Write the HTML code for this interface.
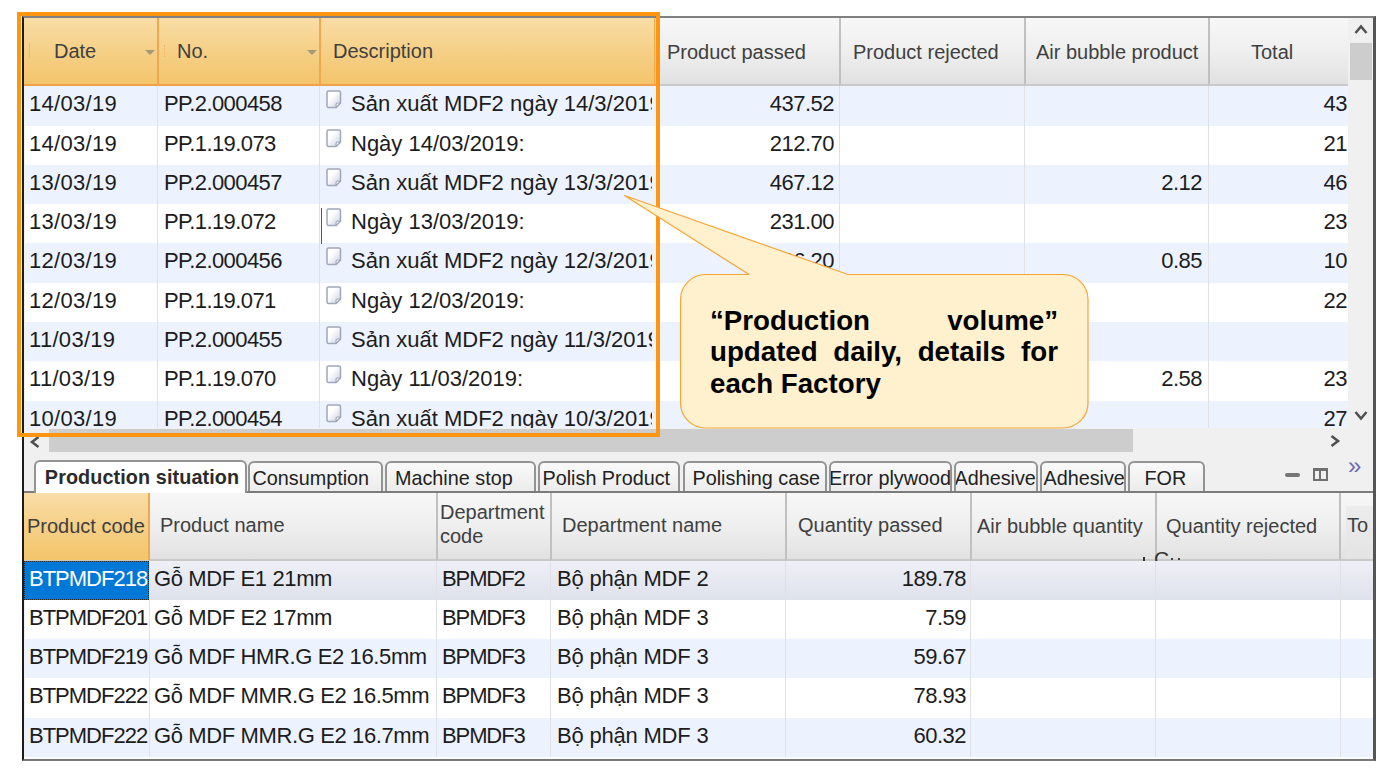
<!DOCTYPE html>
<html lang="vi">
<head>
<meta charset="utf-8">
<title>Production volume</title>
<style>
html,body{margin:0;padding:0;background:#fff;}
body{width:1396px;height:771px;position:relative;overflow:hidden;font-family:"Liberation Sans",sans-serif;color:#1a1a1a;}
.abs{position:absolute;}
#win{position:absolute;left:22px;top:16px;width:1354px;height:745px;background:#f0f0f0;box-sizing:border-box;border-left:2px solid #1c1c1c;border-top:2px solid #808080;border-right:3px solid #555;border-bottom:2px solid #777;}
/* rows */
.row{position:absolute;left:25px;height:39px;}
.alt{background:#ecf2fe;}
.wht{background:#ffffff;}
.cell{position:absolute;top:0;height:100%;font-size:22px;line-height:36px;white-space:nowrap;overflow:hidden;color:#1c1c1c;}
.r{text-align:right;letter-spacing:-0.5px;}
.l1{letter-spacing:-0.6px;}.l2{letter-spacing:0;}.l3{letter-spacing:-1px;}.l4{letter-spacing:-0.38px;}.l5{letter-spacing:-1.1px;}.l6{letter-spacing:-0.2px;}
.vsep{position:absolute;width:1px;background:#e0e1e6;}
.hdr{position:absolute;background:linear-gradient(#f7f7f7 0%,#efefef 50%,#e1e1e1 100%);}
.hdro{position:absolute;background:linear-gradient(#f9dda6 0%,#f6d18a 45%,#f3c56b 100%);}
.ht{position:absolute;font-size:20px;line-height:23.5px;color:#404040;white-space:nowrap;}
.hsep{position:absolute;width:2px;background:#c0c0c0;}
.tab{position:absolute;top:461px;height:30px;box-sizing:border-box;border:2px solid #939393;border-bottom:none;border-radius:6px 6px 0 0;background:linear-gradient(#f9f9f9,#ececec);font-size:19.8px;line-height:31px;color:#222;white-space:nowrap;overflow:hidden;text-align:center;}
.cb{position:absolute;left:6px;top:5px;width:15px;height:17px;border:1px solid #8e94a6;border-right-width:2px;border-bottom-width:2px;border-radius:3px;background:linear-gradient(160deg,#ffffff 35%,#d5d9e6 100%);box-sizing:border-box;}
</style>
</head>
<body>
<svg width="0" height="0" style="position:absolute"><defs>
<linearGradient id="nG" x1="0" y1="0" x2="1" y2="1"><stop offset="0.35" stop-color="#ffffff"/><stop offset="1" stop-color="#c9cfe2"/></linearGradient>
<symbol id="note" viewBox="0 0 16 19"><path d="M2.6 1 H12.9 Q14.5 1 14.5 2.6 V13 L10 17.6 H2.6 Q1 17.6 1 16 V2.6 Q1 1 2.6 1 Z" fill="url(#nG)" stroke="#a0a7bb" stroke-width="1.5"/><path d="M14.5 13 H11.6 Q10 13 10 14.6 V17.6 Z" fill="#f3f4f9" stroke="#a0a7bb" stroke-width="1.1" stroke-linejoin="round"/></symbol>
</defs></svg>
<div id="win"></div>

<!-- TOP GRID HEADER -->
<div id="tophdr">
<div class="hdro" style="left:24px;top:18px;width:634px;height:66px;"></div>
<div class="abs" style="left:24px;top:84px;width:634px;height:2px;background:#f0a24a;"></div>
<div class="hdr" style="left:658px;top:18px;width:690px;height:66px;"></div>
<div class="abs" style="left:658px;top:84px;width:690px;height:2px;background:#c9c9c9;"></div>
<div class="abs" style="left:157px;top:18px;width:2px;height:67px;background:#f1a650;"></div>
<div class="abs" style="left:319px;top:18px;width:2px;height:67px;background:#f1a650;"></div>
<div class="abs" style="left:654px;top:18px;width:1px;height:67px;background:#f1a650;"></div>
<div class="hsep" style="left:839px;top:18px;height:67px;"></div>
<div class="hsep" style="left:1024px;top:18px;height:67px;"></div>
<div class="hsep" style="left:1208px;top:18px;height:67px;"></div>
<div class="abs" style="left:29px;top:43px;width:1px;height:15px;background:#f3b674;"></div>
<div class="abs" style="left:164px;top:45px;width:1px;height:12px;border-left:1px dotted #f0b060;"></div>
<div class="ht" style="left:54px;top:40px;">Date</div>
<div class="abs" style="left:145px;top:50px;width:0;height:0;border-left:5px solid transparent;border-right:5px solid transparent;border-top:5px solid #a39a78;"></div>
<div class="ht" style="left:177px;top:40px;">No.</div>
<div class="abs" style="left:307px;top:50px;width:0;height:0;border-left:5px solid transparent;border-right:5px solid transparent;border-top:5px solid #a39a78;"></div>
<div class="ht" style="left:333px;top:40px;">Description</div>
<div class="ht" style="left:667px;top:41px;">Product passed</div>
<div class="ht" style="left:853px;top:41px;">Product rejected</div>
<div class="ht" style="left:1036px;top:41px;">Air bubble product</div>
<div class="ht" style="left:1251px;top:41px;">Total</div>
</div>
<!-- TOP GRID ROWS -->
<div id="toprows" class="abs" style="left:0;top:86.3px;width:1348px;height:341.7px;overflow:hidden;">
<div class="row alt" style="top:0.0px;width:1323px;height:39.3px;"><div class="cell" style="left:4px;width:128px;letter-spacing:0.3px;">14/03/19</div><div class="cell l1" style="left:139px;width:155px;">PP.2.000458</div><div class="cell l2" style="left:295px;width:332px;"><svg class="abs" style="left:5.5px;top:3.5px;" width="16" height="19"><use href="#note"/></svg><span style="margin-left:31px;">Sản xuất MDF2 ngày 14/3/2019</span></div><div class="cell r" style="left:640px;width:169px;">437.52</div><div class="cell r" style="left:1000px;width:177px;"></div><div class="cell r" style="left:1190px;width:132px;">43</div></div>
<div class="row wht" style="top:39.3px;width:1323px;height:39.3px;"><div class="cell" style="left:4px;width:128px;letter-spacing:0.3px;">14/03/19</div><div class="cell l1" style="left:139px;width:155px;">PP.1.19.073</div><div class="cell l2" style="left:295px;width:332px;"><svg class="abs" style="left:5.5px;top:3.5px;" width="16" height="19"><use href="#note"/></svg><span style="margin-left:31px;">Ngày 14/03/2019:</span></div><div class="cell r" style="left:640px;width:169px;">212.70</div><div class="cell r" style="left:1000px;width:177px;"></div><div class="cell r" style="left:1190px;width:132px;">21</div></div>
<div class="row alt" style="top:78.6px;width:1323px;height:39.3px;"><div class="cell" style="left:4px;width:128px;letter-spacing:0.3px;">13/03/19</div><div class="cell l1" style="left:139px;width:155px;">PP.2.000457</div><div class="cell l2" style="left:295px;width:332px;"><svg class="abs" style="left:5.5px;top:3.5px;" width="16" height="19"><use href="#note"/></svg><span style="margin-left:31px;">Sản xuất MDF2 ngày 13/3/2019</span></div><div class="cell r" style="left:640px;width:169px;">467.12</div><div class="cell r" style="left:1000px;width:177px;">2.12</div><div class="cell r" style="left:1190px;width:132px;">46</div></div>
<div class="row wht" style="top:117.9px;width:1323px;height:39.3px;"><div class="cell" style="left:4px;width:128px;letter-spacing:0.3px;">13/03/19</div><div class="cell l1" style="left:139px;width:155px;">PP.1.19.072</div><div class="cell l2" style="left:295px;width:332px;"><svg class="abs" style="left:5.5px;top:3.5px;" width="16" height="19"><use href="#note"/></svg><span style="margin-left:31px;">Ngày 13/03/2019:</span></div><div class="cell r" style="left:640px;width:169px;">231.00</div><div class="cell r" style="left:1000px;width:177px;"></div><div class="cell r" style="left:1190px;width:132px;">23</div></div>
<div class="row alt" style="top:157.2px;width:1323px;height:39.3px;"><div class="cell" style="left:4px;width:128px;letter-spacing:0.3px;">12/03/19</div><div class="cell l1" style="left:139px;width:155px;">PP.2.000456</div><div class="cell l2" style="left:295px;width:332px;"><svg class="abs" style="left:5.5px;top:3.5px;" width="16" height="19"><use href="#note"/></svg><span style="margin-left:31px;">Sản xuất MDF2 ngày 12/3/2019</span></div><div class="cell r" style="left:640px;width:169px;">106.20</div><div class="cell r" style="left:1000px;width:177px;">0.85</div><div class="cell r" style="left:1190px;width:132px;">10</div></div>
<div class="row wht" style="top:196.5px;width:1323px;height:39.3px;"><div class="cell" style="left:4px;width:128px;letter-spacing:0.3px;">12/03/19</div><div class="cell l1" style="left:139px;width:155px;">PP.1.19.071</div><div class="cell l2" style="left:295px;width:332px;"><svg class="abs" style="left:5.5px;top:3.5px;" width="16" height="19"><use href="#note"/></svg><span style="margin-left:31px;">Ngày 12/03/2019:</span></div><div class="cell r" style="left:640px;width:169px;">224.30</div><div class="cell r" style="left:1000px;width:177px;"></div><div class="cell r" style="left:1190px;width:132px;">22</div></div>
<div class="row alt" style="top:235.8px;width:1323px;height:39.3px;"><div class="cell" style="left:4px;width:128px;letter-spacing:0.3px;">11/03/19</div><div class="cell l1" style="left:139px;width:155px;">PP.2.000455</div><div class="cell l2" style="left:295px;width:332px;"><svg class="abs" style="left:5.5px;top:3.5px;" width="16" height="19"><use href="#note"/></svg><span style="margin-left:31px;">Sản xuất MDF2 ngày 11/3/2019</span></div><div class="cell r" style="left:640px;width:169px;"></div><div class="cell r" style="left:1000px;width:177px;"></div><div class="cell r" style="left:1190px;width:132px;"></div></div>
<div class="row wht" style="top:275.1px;width:1323px;height:39.3px;"><div class="cell" style="left:4px;width:128px;letter-spacing:0.3px;">11/03/19</div><div class="cell l1" style="left:139px;width:155px;">PP.1.19.070</div><div class="cell l2" style="left:295px;width:332px;"><svg class="abs" style="left:5.5px;top:3.5px;" width="16" height="19"><use href="#note"/></svg><span style="margin-left:31px;">Ngày 11/03/2019:</span></div><div class="cell r" style="left:640px;width:169px;">236.50</div><div class="cell r" style="left:1000px;width:177px;">2.58</div><div class="cell r" style="left:1190px;width:132px;">23</div></div>
<div class="row alt" style="top:314.4px;width:1323px;height:39.3px;"><div class="cell" style="left:4px;width:128px;letter-spacing:0.3px;">10/03/19</div><div class="cell l1" style="left:139px;width:155px;">PP.2.000454</div><div class="cell l2" style="left:295px;width:332px;"><svg class="abs" style="left:5.5px;top:3.5px;" width="16" height="19"><use href="#note"/></svg><span style="margin-left:31px;">Sản xuất MDF2 ngày 10/3/2019</span></div><div class="cell r" style="left:640px;width:169px;">271.40</div><div class="cell r" style="left:1000px;width:177px;"></div><div class="cell r" style="left:1190px;width:132px;">27</div></div>
<div class="abs" style="left:321px;top:122px;width:1px;height:36px;background:#555;"></div>
<div class="vsep" style="left:157px;top:0;height:342px;"></div>
<div class="vsep" style="left:319px;top:0;height:342px;"></div>
<div class="vsep" style="left:657px;top:0;height:342px;"></div>
<div class="vsep" style="left:839px;top:0;height:342px;"></div>
<div class="vsep" style="left:1024px;top:0;height:342px;"></div>
<div class="vsep" style="left:1208px;top:0;height:342px;"></div>
</div>
<!-- SCROLLBARS -->
<div id="scroll">
<div class="abs" style="left:1348px;top:18px;width:25px;height:410px;background:#f0f0f0;"></div>
<div class="abs" style="left:1350px;top:43px;width:22px;height:37px;background:#cdcdcd;"></div>
<svg class="abs" style="left:1352px;top:22px;" width="18" height="14" viewBox="0 0 18 14"><path d="M3.5 11 L9 4.5 L14.5 11" fill="none" stroke="#505050" stroke-width="2.5"/></svg>
<svg class="abs" style="left:1352px;top:409px;" width="18" height="14" viewBox="0 0 18 14"><path d="M3.5 3 L9 9.5 L14.5 3" fill="none" stroke="#505050" stroke-width="2.5"/></svg>
<div class="abs" style="left:24px;top:428px;width:1349px;height:24px;background:#f0f0f0;"></div>
<div class="abs" style="left:49px;top:429px;width:1084px;height:23px;background:#cdcdcd;"></div>
<svg class="abs" style="left:28px;top:434px;" width="14" height="16" viewBox="0 0 14 16"><path d="M10.5 3 L4 8 L10.5 13" fill="none" stroke="#505050" stroke-width="2.6"/></svg>
<svg class="abs" style="left:1328px;top:433px;" width="14" height="16" viewBox="0 0 14 16"><path d="M3.5 3 L10 8 L3.5 13" fill="none" stroke="#505050" stroke-width="2.6"/></svg>
</div>
<!-- TABS -->
<div id="tabs">
<div class="abs" style="left:24px;top:491px;width:1349px;height:2px;background:#7c7c7c;"></div>
<div class="tab" style="left:248px;width:135px;"><span class="abs" style="left:2.5px;top:0;">Consumption</span></div>
<div class="tab" style="left:385px;width:150.5px;"><span class="abs" style="left:8px;top:0;">Machine stop</span></div>
<div class="tab" style="left:537.5px;width:142.5px;"><span class="abs" style="left:3.0px;top:0;">Polish Product</span></div>
<div class="tab" style="left:682.5px;width:144.0px;"><span class="abs" style="left:8.0px;top:0;">Polishing case</span></div>
<div class="tab" style="left:828.5px;width:123.5px;"><span class="abs" style="left:-1.5px;top:0;">Error plywood</span></div>
<div class="tab" style="left:953.5px;width:84.0px;"><span class="abs" style="left:-1.0px;top:0;">Adhesive</span></div>
<div class="tab" style="left:1040px;width:85.5px;"><span class="abs" style="left:1.5px;top:0;">Adhesive</span></div>
<div class="tab" style="left:1127.5px;width:77.5px;"><span class="abs" style="left:15.0px;top:0;">FOR</span></div>
<div class="tab" style="left:34px;width:213px;top:460px;height:33px;background:#fff;font-weight:bold;line-height:31px;letter-spacing:0.1px;padding-left:3px;color:#2b2b2b;">Production situation</div>
<div class="abs" style="left:1285px;top:472.5px;width:15px;height:4px;border-radius:2px;background:#757575;"></div>
<div class="abs" style="left:1313px;top:468px;width:15px;height:13px;box-sizing:border-box;border:2px solid #707070;border-top-width:3px;"><div class="abs" style="left:4px;top:0;width:2px;height:8px;background:#707070;"></div></div>
<div class="abs" style="left:1348px;top:453px;font-size:24px;line-height:26px;color:#6a6ab4;">»</div>
</div>
<!-- BOTTOM GRID -->
<div id="bothdr">
<div class="hdr" style="left:24px;top:493px;width:1349px;height:66px;"></div>
<div class="abs" style="left:24px;top:559px;width:1349px;height:2px;background:#c9c9c9;"></div>
<div class="hdro" style="left:24px;top:493px;width:125px;height:67px;"></div>
<div class="abs" style="left:148px;top:493px;width:2px;height:67px;background:#f1a650;"></div>
<div class="hsep" style="left:436px;top:493px;height:67px;"></div>
<div class="hsep" style="left:550px;top:493px;height:67px;"></div>
<div class="hsep" style="left:785px;top:493px;height:67px;"></div>
<div class="hsep" style="left:970px;top:493px;height:67px;"></div>
<div class="hsep" style="left:1155px;top:493px;height:67px;"></div>
<div class="hsep" style="left:1339px;top:493px;height:67px;"></div>
<div class="abs" style="left:1346px;top:506px;width:27px;height:53px;background:linear-gradient(#ececec,#e4e4e4);"></div>
<div class="ht" style="left:27px;top:515px;">Product code</div>
<div class="ht" style="left:160px;top:514px;">Product name</div>
<div class="ht" style="left:440px;top:501px;">Department<br>code</div>
<div class="ht" style="left:562px;top:514px;">Department name</div>
<div class="ht" style="left:798px;top:514px;">Quantity passed</div>
<div class="ht" style="left:977px;top:515px;">Air bubble quantity</div>
<div class="ht" style="left:1166px;top:515px;">Quantity rejected</div>
<div class="ht" style="left:1347px;top:513.5px;width:26px;overflow:hidden;">To</div>
<div class="abs" style="left:1154px;top:548px;font-size:21px;line-height:22px;color:#333;height:12.5px;overflow:hidden;">C</div>
<div class="abs" style="left:1143px;top:557px;width:2px;height:4px;background:#333;"></div>
<div class="abs" style="left:1171px;top:558px;width:2px;height:2px;background:#444;"></div>
<div class="abs" style="left:1178px;top:558px;width:2px;height:2px;background:#444;"></div>
</div>
<div id="botrows" class="abs" style="left:0;top:560.5px;width:1373px;height:196.5px;overflow:hidden;">
<div class="row " style="top:0.0px;width:1348px;height:39.3px;background:linear-gradient(#eff0f6,#dee2ec);"><div class="cell l3" style="left:-1px;width:125px;background:#0078d7;color:#fff;outline:1px dotted #2a2a2a;outline-offset:-1px;"><span style="margin-left:5px;">BTPMDF218</span></div><div class="cell l4" style="left:129px;width:282px;">Gỗ MDF E1 21mm</div><div class="cell l5" style="left:417px;width:108px;">BPMDF2</div><div class="cell l6" style="left:532px;width:228px;">Bộ phận MDF 2</div><div class="cell r" style="left:770px;width:171px;">189.78</div></div>
<div class="row wht" style="top:39.3px;width:1348px;height:39.3px;"><div class="cell l3" style="left:0;width:124px;"><span style="margin-left:4px;">BTPMDF201</span></div><div class="cell l4" style="left:129px;width:282px;">Gỗ MDF E2 17mm</div><div class="cell l5" style="left:417px;width:108px;">BPMDF3</div><div class="cell l6" style="left:532px;width:228px;">Bộ phận MDF 3</div><div class="cell r" style="left:770px;width:171px;">7.59</div></div>
<div class="row alt" style="top:78.6px;width:1348px;height:39.3px;"><div class="cell l3" style="left:0;width:124px;"><span style="margin-left:4px;">BTPMDF219</span></div><div class="cell l4" style="left:129px;width:282px;">Gỗ MDF HMR.G E2 16.5mm</div><div class="cell l5" style="left:417px;width:108px;">BPMDF3</div><div class="cell l6" style="left:532px;width:228px;">Bộ phận MDF 3</div><div class="cell r" style="left:770px;width:171px;">59.67</div></div>
<div class="row wht" style="top:117.9px;width:1348px;height:39.3px;"><div class="cell l3" style="left:0;width:124px;"><span style="margin-left:4px;">BTPMDF222</span></div><div class="cell l4" style="left:129px;width:282px;">Gỗ MDF MMR.G E2 16.5mm</div><div class="cell l5" style="left:417px;width:108px;">BPMDF3</div><div class="cell l6" style="left:532px;width:228px;">Bộ phận MDF 3</div><div class="cell r" style="left:770px;width:171px;">78.93</div></div>
<div class="row alt" style="top:157.2px;width:1348px;height:39.3px;"><div class="cell l3" style="left:0;width:124px;"><span style="margin-left:4px;">BTPMDF222</span></div><div class="cell l4" style="left:129px;width:282px;">Gỗ MDF MMR.G E2 16.7mm</div><div class="cell l5" style="left:417px;width:108px;">BPMDF3</div><div class="cell l6" style="left:532px;width:228px;">Bộ phận MDF 3</div><div class="cell r" style="left:770px;width:171px;">60.32</div></div>
<div class="vsep" style="left:149px;top:0;height:197px;"></div>
<div class="vsep" style="left:436px;top:0;height:197px;"></div>
<div class="vsep" style="left:550px;top:0;height:197px;"></div>
<div class="vsep" style="left:785px;top:0;height:197px;"></div>
<div class="vsep" style="left:970px;top:0;height:197px;"></div>
<div class="vsep" style="left:1155px;top:0;height:197px;"></div>
<div class="vsep" style="left:1340px;top:0;height:197px;"></div>
</div>
<div class="abs" style="left:24px;top:757px;width:1349px;height:2px;background:#fbfbfb;"></div>
<!-- HIGHLIGHT + CALLOUT -->
<div id="overlay">
<div class="abs" style="left:17px;top:12px;width:643px;height:425px;box-sizing:border-box;border:4.5px solid #ff9510;"></div>
<svg class="abs" style="left:600px;top:180px;" width="500" height="260" viewBox="600 180 500 260">
<path d="M624.5 195.5 L848 274.5 L1063 274.5 A25 25 0 0 1 1088 299.5 L1088 403 A25 25 0 0 1 1063 428 L705.5 428 A25 25 0 0 1 680.5 403 L680.5 299.5 A25 25 0 0 1 705.5 274.5 L749 274.5 Z" fill="#fff0ce" stroke="#f7a537" stroke-width="1.2" stroke-linejoin="round"/>
</svg>
<div class="abs" style="left:710px;top:304.8px;width:348px;font-weight:bold;font-size:27.7px;line-height:31.4px;color:#000;text-align:justify;">“Production volume” updated daily, details for each Factory</div>
</div>
</body>
</html>
